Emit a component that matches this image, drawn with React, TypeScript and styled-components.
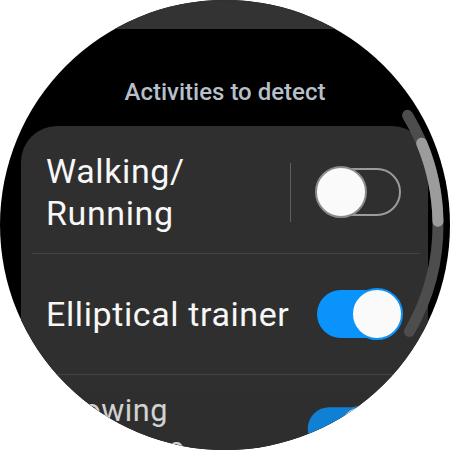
import React from "react";
import styled, { createGlobalStyle } from "styled-components";

const Global = createGlobalStyle`
  html, body {
    margin: 0;
    padding: 0;
    background: #ffffff;
  }
  #root {
    width: 450px;
    height: 450px;
  }
`;

const Watch = styled.div`
  position: relative;
  width: 450px;
  height: 450px;
  border-radius: 50%;
  overflow: hidden;
  background: #000000;
  display: flex;
  flex-direction: column;
  font-family: Roboto, "Noto Sans", sans-serif;
`;

const Peek = styled.div`
  flex-shrink: 0;
  height: 29px;
  background: #333333;
`;

const Title = styled.div`
  flex-shrink: 0;
  box-sizing: border-box;
  height: 97px;
  padding-top: 49px;
  text-align: center;
  font-size: 24px;
  font-weight: 500;
  line-height: 28px;
  color: #b7bfc8;
`;

const Card = styled.div`
  flex: 1;
  margin: 0 22px 0 21px;
  background: #2f2f2f;
  border-radius: 36px 36px 0 0;
  display: flex;
  flex-direction: column;
`;

const Row = styled.div<{ $padTop: number; $padBottom: number; $minH?: number }>`
  flex-shrink: 0;
  box-sizing: border-box;
  display: flex;
  align-items: center;
  padding: ${(p) => p.$padTop}px 25px ${(p) => p.$padBottom}px 25px;
  min-height: ${(p) => p.$minH ?? 0}px;
`;

const Content = styled.div<{ $scale: number; $faded?: boolean }>`
  flex: 1;
  display: flex;
  align-items: center;
  transform: scale(${(p) => p.$scale});
  transform-origin: center top;
  opacity: ${(p) => (p.$faded ? 0.82 : 1)};
`;

const Label = styled.div`
  flex: 1;
  font-size: 34px;
  letter-spacing: 0.6px;
  line-height: 42px;
  color: #f7f7f7;
`;

const Divider = styled.div`
  flex-shrink: 0;
  height: 1px;
  margin: 0 8px 0 11px;
  background: #444444;
`;

const VRule = styled.div`
  width: 1.5px;
  height: 59px;
  margin-right: 24px;
  background: #5f5f5f;
`;

const Switch = styled.div`
  position: relative;
  flex-shrink: 0;
  width: 88px;
  height: 52px;
`;

const Track = styled.div<{ $on: boolean }>`
  position: absolute;
  left: 2px;
  top: 2px;
  box-sizing: border-box;
  width: 84px;
  height: 48px;
  border-radius: 24px;
  background: ${(p) => (p.$on ? "#0a93fb" : "transparent")};
  border: ${(p) => (p.$on ? "none" : "2px solid #9b9b9b")};
`;

const Knob = styled.div<{ $on: boolean }>`
  position: absolute;
  top: 0;
  left: ${(p) => (p.$on ? 36 : 0)}px;
  box-sizing: border-box;
  width: 52px;
  height: 52px;
  border-radius: 50%;
  background: #fafafa;
  border: 2px solid ${(p) => (p.$on ? "#0a93fb" : "#8a8a8a")};
`;

const ScrollArc = styled.svg`
  position: absolute;
  inset: 0;
  pointer-events: none;
`;

const Toggle = ({ on }: { on: boolean }) => (
  <Switch>
    <Track $on={on} />
    <Knob $on={on} />
  </Switch>
);

// point on the bezel ring, angle in degrees from 3 o'clock, clockwise
const ring = (deg: number, r = 213) => {
  const a = (deg * Math.PI) / 180;
  return [225 + r * Math.cos(a), 225 + r * Math.sin(a)];
};

const arc = (from: number, to: number) => {
  const [x1, y1] = ring(from);
  const [x2, y2] = ring(to);
  return `M ${x1} ${y1} A 213 213 0 0 1 ${x2} ${y2}`;
};

export default function App() {
  return (
    <>
      <Global />
      <Watch>
        <Peek />
        <Title>Activities to detect</Title>
        <Card>
          <Row $padTop={24} $padBottom={19}>
            <Content $scale={1}>
              <Label>
                Walking/
                <br />
                Running
              </Label>
              <VRule />
              <Toggle on={false} />
            </Content>
          </Row>
          <Divider />
          <Row $padTop={0} $padBottom={0} $minH={120}>
            <Content $scale={1}>
              <Label>Elliptical trainer</Label>
              <Toggle on={true} />
            </Content>
          </Row>
          <Divider />
          <Row $padTop={16} $padBottom={0}>
            <Content $scale={0.9} $faded>
              <Label>
                Rowing
                <br />
                machine
              </Label>
              <Toggle on={true} />
            </Content>
          </Row>
        </Card>
        <ScrollArc width="450" height="450" viewBox="0 0 450 450">
          <path d={arc(-31, 30)} stroke="#4d4d4d" strokeWidth="11" strokeLinecap="round" fill="none" />
          <path d={arc(-22.6, -1)} stroke="#9c9c9c" strokeWidth="11" strokeLinecap="round" fill="none" />
        </ScrollArc>
      </Watch>
    </>
  );
}
